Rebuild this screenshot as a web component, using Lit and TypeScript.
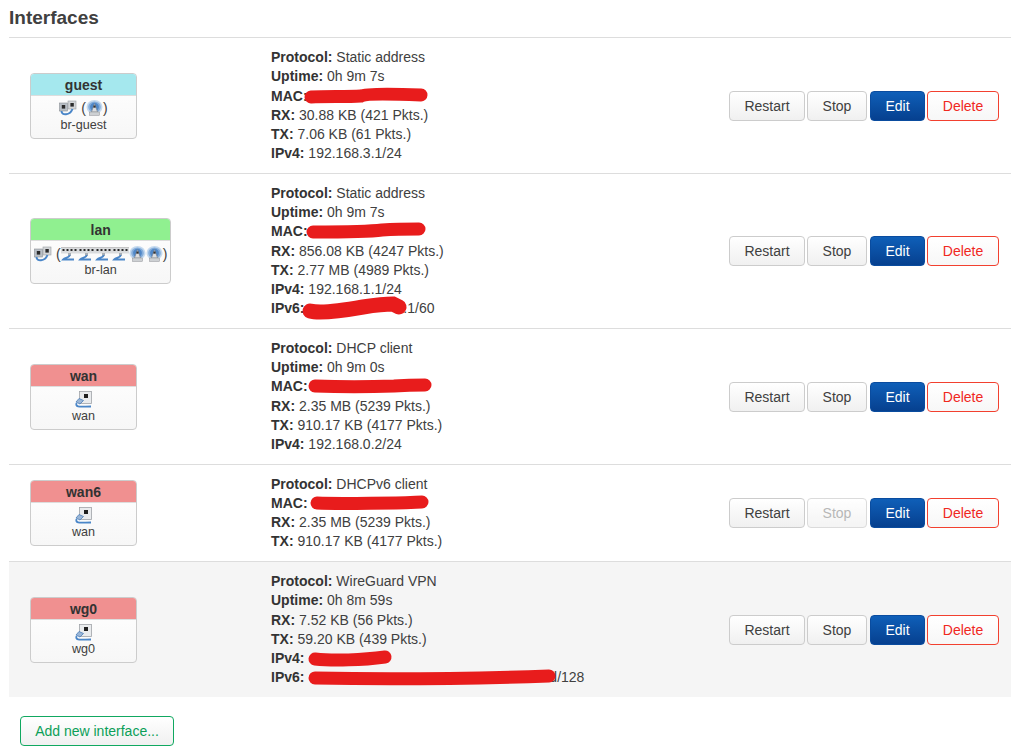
import { LitElement, html, css, svg } from "lit";
import { customElement } from "lit/decorators.js";

type Line = { k: string; v: string; mark?: string; ml?: number; mt?: number; mw?: number; mh?: number; gap?: number; sw?: number };
type Row = { name: string; color: string; icons: string[]; dev: string; lines: Line[]; stopOff?: boolean; alt?: boolean };

const rows: Row[] = [
  { name: "guest", color: "#a5e8ee", icons: ["bridge", "(", "wifi", ")"], dev: "br-guest", lines: [
    { k: "Protocol:", v: "Static address" }, { k: "Uptime:", v: "0h 9m 7s" },
    { k: "MAC:", v: "", mark: "M6 10 C22 9 40 10 56 9 C62 6 92 7 116 8", ml: 34, mt: 0, mw: 124, mh: 17 },
    { k: "RX:", v: "30.88 KB (421 Pkts.)" }, { k: "TX:", v: "7.06 KB (61 Pkts.)" }, { k: "IPv4:", v: "192.168.3.1/24" } ] },
  { name: "lan", color: "#90f090", icons: ["bridge", "(", "port", "port", "port", "port", "wifi", "wifi", ")"], dev: "br-lan", lines: [
    { k: "Protocol:", v: "Static address" }, { k: "Uptime:", v: "0h 9m 7s" },
    { k: "MAC:", v: "", mark: "M6 10 C30 10 60 10 75 8 C90 7 105 7 112 7", ml: 36, mt: 0, mw: 120, mh: 17 },
    { k: "RX:", v: "856.08 KB (4247 Pkts.)" }, { k: "TX:", v: "2.77 MB (4989 Pkts.)" }, { k: "IPv4:", v: "192.168.1.1/24" },
    { k: "IPv6:", v: ":1/60", gap: 95, sw: 15, mark: "M9 15 C20 18 45 14 62 11 C75 9 85 8 92 8 L98 11", ml: 30, mt: -3, mw: 108, mh: 24 } ] },
  { name: "wan", color: "#f09090", icons: ["wan"], dev: "wan", lines: [
    { k: "Protocol:", v: "DHCP client" }, { k: "Uptime:", v: "0h 9m 0s" },
    { k: "MAC:", v: "", mark: "M6 9 C30 10 60 10 85 9 C100 8 110 8 116 8", ml: 38, mt: 0, mw: 124, mh: 17 },
    { k: "RX:", v: "2.35 MB (5239 Pkts.)" }, { k: "TX:", v: "910.17 KB (4177 Pkts.)" }, { k: "IPv4:", v: "192.168.0.2/24" } ] },
  { name: "wan6", color: "#f09090", icons: ["wan"], dev: "wan", stopOff: true, lines: [
    { k: "Protocol:", v: "DHCPv6 client" },
    { k: "MAC:", v: "", mark: "M6 9 C30 10 60 9 85 9 C100 9 106 8 111 8", ml: 40, mt: 0, mw: 118, mh: 17 },
    { k: "RX:", v: "2.35 MB (5239 Pkts.)" }, { k: "TX:", v: "910.17 KB (4177 Pkts.)" } ] },
  { name: "wg0", color: "#f09090", icons: ["wan"], dev: "wg0", alt: true, lines: [
    { k: "Protocol:", v: "WireGuard VPN" }, { k: "Uptime:", v: "0h 8m 59s" },
    { k: "RX:", v: "7.52 KB (56 Pkts.)" }, { k: "TX:", v: "59.20 KB (439 Pkts.)" },
    { k: "IPv4:", v: "", mark: "M7 10 C25 12 55 11 77 8", ml: 37, mt: 0, mw: 86, mh: 18 },
    { k: "IPv6:", v: "d/128", gap: 241, mark: "M7 10 C60 11 150 11 241 8", ml: 37, mt: 0, mw: 250, mh: 17 } ] },
];

const bridge = svg`<svg class="ic" width="18" height="16" viewBox="0 0 18 16">
  <rect x=".5" y="3" width="8" height="8" fill="#b9bfc6" stroke="#8a8f95" stroke-width=".6"/>
  <rect x="9" y="1" width="8" height="8" fill="#d2d5d8" stroke="#9a9ea2" stroke-width=".6"/>
  <rect x="2.8" y="5" width="3.4" height="3.6" fill="#2b2b2b"/><rect x="11.4" y="3" width="3.4" height="3.6" fill="#2b2b2b"/>
  <path d="M2.5 11 C2.5 16 11 15.5 13.5 9" fill="none" stroke="#4a86c8" stroke-width="2"/>
</svg>`;
const wifi = svg`<svg class="ic" width="17" height="16" viewBox="0 0 17 16">
  <ellipse cx="8.5" cy="7" rx="8" ry="7" fill="#c4d9ee"/><ellipse cx="8.5" cy="7" rx="6.3" ry="5.6" fill="#86aedb"/><ellipse cx="8.5" cy="7" rx="4.4" ry="4.2" fill="#4f87c7"/>
  <path d="M8.5 3.5 L5.5 12 H11.5 Z" fill="#dcdee0" stroke="#7d8086" stroke-width=".6"/>
  <rect x="3.5" y="12" width="10" height="3.4" fill="#cdd0d3" stroke="#8d9095" stroke-width=".5"/>
  <rect x="7.4" y="5.5" width="2.2" height="2.2" fill="#333"/>
</svg>`;
const port = svg`<svg class="ic" width="17" height="16" viewBox="0 0 17 16">
  <rect x="0" y="1.5" width="17" height="6" fill="#d9dbdd"/>
  <path d="M0 1.5H17" stroke="#aaa" stroke-width=".6"/>
  <path d="M1.5 4H3.5M5.5 4H7.5M9.5 4H11.5M13.5 4H15.5" stroke="#2b2b2b" stroke-width="2"/>
  <rect x="7" y="7" width="3" height="3" fill="#aab0b6"/>
  <path d="M8.5 9 C9 12 4 11 2 13.5 H13" fill="none" stroke="#4a86c8" stroke-width="1.8"/>
</svg>`;
const wan = svg`<svg class="ic" width="17" height="17" viewBox="0 0 17 17">
  <rect x="4.5" y=".5" width="12" height="12" fill="#e9ebed" stroke="#a0a4a8" stroke-width=".8"/>
  <rect x="9" y="3" width="4" height="4" fill="#1f1f1f"/>
  <path d="M4 7.5 L8.5 9.5 L5 13 L1 11 Z" fill="#9bb6d6" stroke="#4a7cb8" stroke-width=".8"/>
  <path d="M1.5 12 C0 17 6 15.5 16 15.5" fill="none" stroke="#4a86c8" stroke-width="1.8"/>
</svg>`;
const iconMap: Record<string, unknown> = { bridge, wifi, port, wan };

@customElement("app-root")
export class AppRoot extends LitElement {
  static styles = css`
    :host { display: block; font-family: "Liberation Sans", Arial, sans-serif; font-size: 14px; color: #404040; background: #fff; height: 752px; overflow: hidden; }
    .page { padding: 0 13px 0 9px; }
    h3 { margin: 0; height: 37px; box-sizing: border-box; padding-top: 7px; font-size: 19px; line-height: 21px; font-weight: 700; color: #404040; }
    .row { display: grid; grid-template-columns: 262px 1fr auto; align-items: center; border-top: 1px solid #ddd; padding: 10.2px 12px 9.4px 0; }
    .row.alt { background: #f5f5f5; }
    .cell { padding-left: 21px; }
    .box { display: inline-block; min-width: 105px; border: 1px solid #ccc; border-radius: 4px; background: linear-gradient(#fff, #f7f7f7); overflow: hidden; text-align: center; vertical-align: middle; }
    .hd { height: 21px; line-height: 22px; font-weight: 700; border-bottom: 1px solid #ddd; color: #333; }
    .bd { padding: 4px 3px 5px; font-size: 12.6px; line-height: 16px; color: #404040; }
    .icons { display: flex; justify-content: center; align-items: center; height: 17px; font-size: 14px; }
    .ic { display: block; flex: none; }
    .gap { width: 4px; }
    .line { position: relative; line-height: 19.2px; white-space: pre; }
    .line b { font-weight: 700; color: #333; }
    .mark { position: absolute; overflow: visible; }
    .btns { display: flex; gap: 2px; align-items: center; }
    button { height: 30px; box-sizing: border-box; padding: 0; font: 14px "Liberation Sans", Arial, sans-serif; border: 1px solid #ccc; border-radius: 4px; background: linear-gradient(#fff, #f0f0f0); color: #404040; }
    .restart { width: 76px; }
    .stop { width: 60px; }
    .edit { width: 55px; background: linear-gradient(#0f5fb8, #06408f); border-color: #0a4c9f; color: #fff; margin-left: 1px; }
    .del { width: 72px; background: linear-gradient(#fff, #f7f7f7); border-color: #f2402f; color: #f0281e; }
    .off { color: #999; opacity: .7; }
    .add { margin: 19px 0 0 11px; }
    .add button { border-color: #10a860; color: #0c9f58; width: 154px; }
  `;

  private icons(list: string[]) {
    return list.map((n, i) => {
      const next = list[i + 1];
      const sep = n === "bridge" && next === "(" ? html`<span class="gap"></span>` : "";
      return html`${iconMap[n] ?? html`<span>${n}</span>`}${sep}`;
    });
  }

  private line(l: Line) {
    const style = `left:${l.ml}px;top:${l.mt}px`;
    const gapStyle = `margin-left:${l.gap ?? 0}px`;
    return html`<div class="line"><b>${l.k}</b> <span style=${gapStyle}>${l.v}</span>${l.mark
      ? html`<svg class="mark" style=${style} width=${l.mw ?? 0} height=${l.mh ?? 0} viewBox="0 0 ${l.mw} ${l.mh}">
          <path d=${l.mark} fill="none" stroke="#e81c1c" stroke-width=${l.sw ?? 13} stroke-linecap="round"/></svg>`
      : ""}</div>`;
  }

  render() {
    return html`<div class="page">
      <h3>Interfaces</h3>
      ${rows.map((r) => html`<div class="row ${r.alt ? "alt" : ""}">
        <div class="cell"><div class="box">
          <div class="hd" style="background:${r.color}">${r.name}</div>
          <div class="bd"><div class="icons">${this.icons(r.icons)}</div><div>${r.dev}</div></div>
        </div></div>
        <div>${r.lines.map((l) => this.line(l))}</div>
        <div class="btns">
          <button class="restart">Restart</button>
          <button class="stop ${r.stopOff ? "off" : ""}">Stop</button>
          <button class="edit">Edit</button>
          <button class="del">Delete</button>
        </div>
      </div>`)}
      <div class="add"><button>Add new interface...</button></div>
    </div>`;
  }
}
